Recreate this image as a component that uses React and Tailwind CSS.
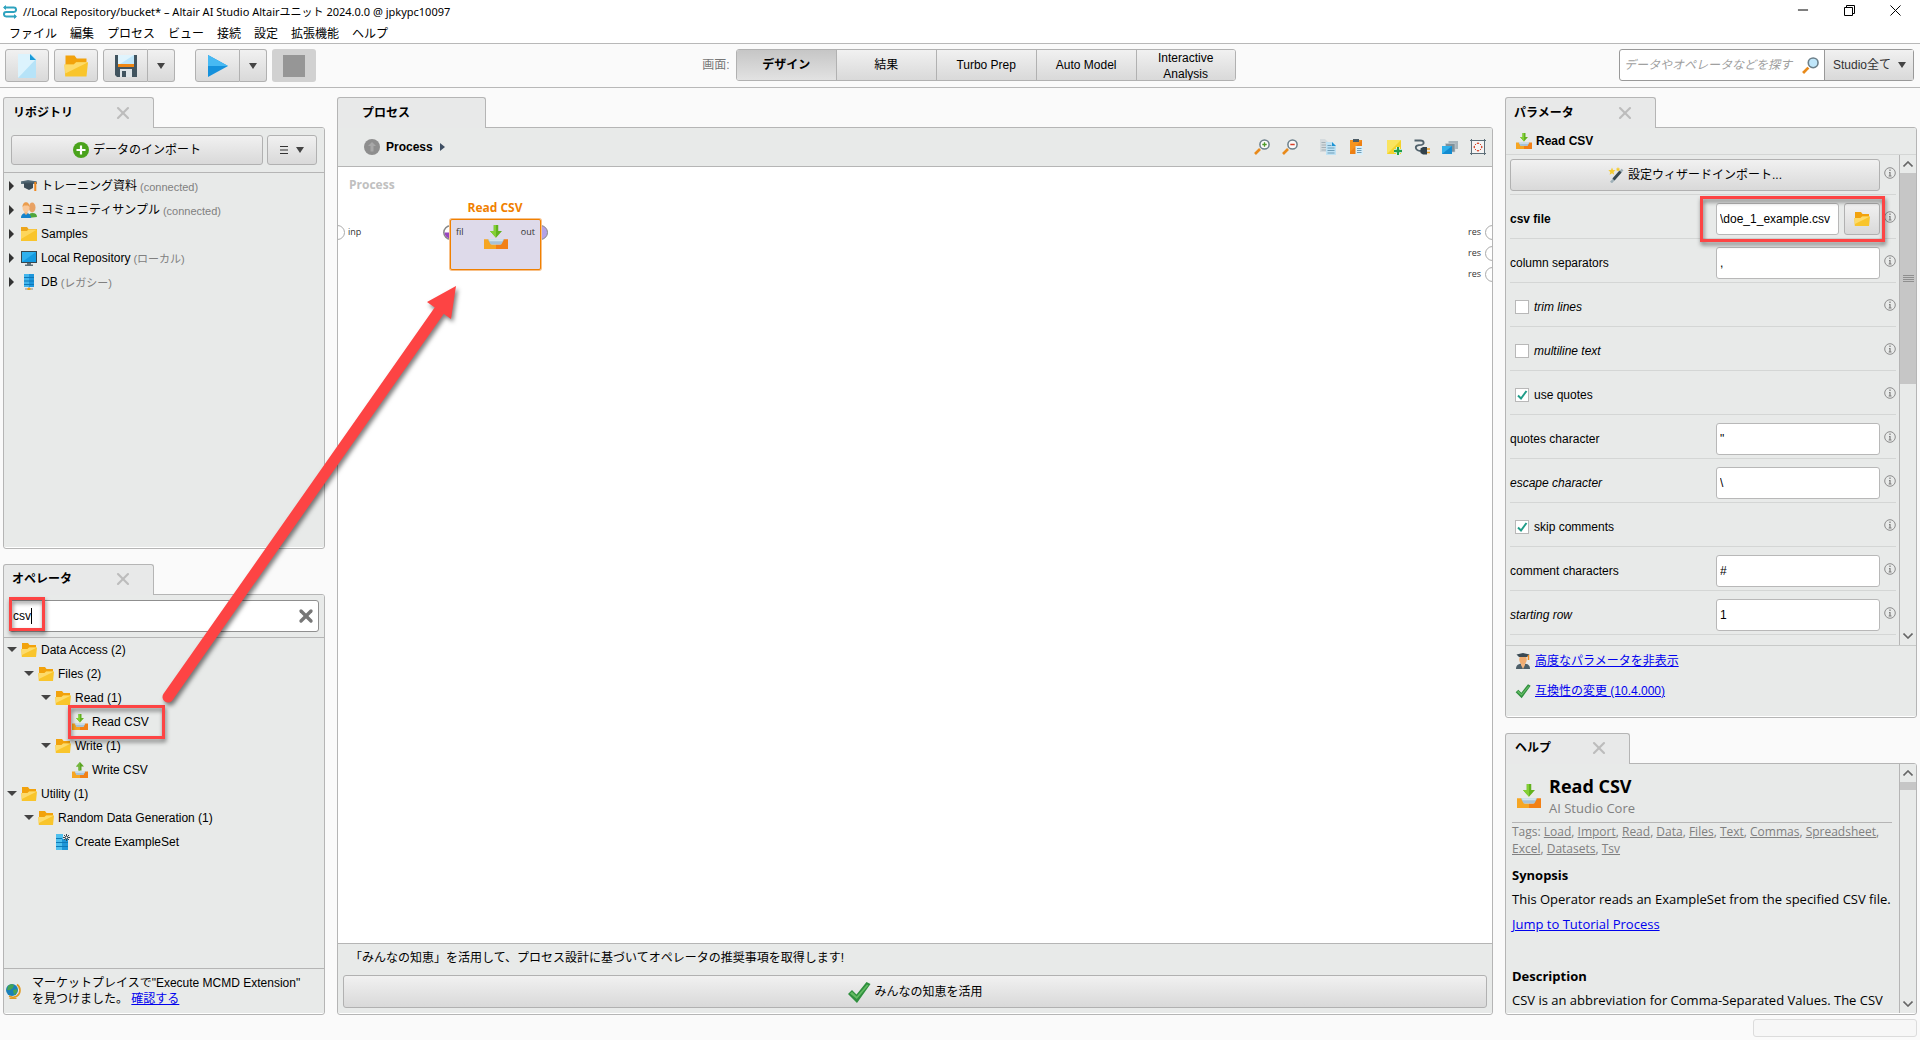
import { useState } from 'react';
import { Minus, X } from 'lucide-react';

const MENU = ['ファイル', '編集', 'プロセス', 'ビュー', '接続', '設定', '拡張機能', 'ヘルプ'];
const VIEWS = ['デザイン', '結果', 'Turbo Prep', 'Auto Model', 'Interactive Analysis'];
const TAGS = ['Load', 'Import', 'Read', 'Data', 'Files', 'Text', 'Commas', 'Spreadsheet', 'Excel', 'Datasets', 'Tsv'];

const REPOSITORIES = [
  { name: 'トレーニング資料', note: '(connected)', Icon: CapIcon },
  { name: 'コミュニティサンプル', note: '(connected)', Icon: PeopleIcon },
  { name: 'Samples', Icon: ClosedFolderIcon },
  { name: 'Local Repository', note: '(ローカル)', Icon: MonitorIcon },
  { name: 'DB', note: '(レガシー)', Icon: DatabaseIcon },
];

const OPERATORS = [
  { name: 'Data Access (2)', indent: 'pl-[3px]', Icon: FolderIcon, open: true },
  { name: 'Files (2)', indent: 'pl-[20px]', Icon: FolderIcon, open: true },
  { name: 'Read (1)', indent: 'pl-[37px]', Icon: FolderIcon, open: true },
  { name: 'Read CSV', indent: 'pl-[54px]', Icon: ReadIcon, marked: true },
  { name: 'Write (1)', indent: 'pl-[37px]', Icon: FolderIcon, open: true },
  { name: 'Write CSV', indent: 'pl-[54px]', Icon: WriteIcon },
  { name: 'Utility (1)', indent: 'pl-[3px]', Icon: FolderIcon, open: true },
  { name: 'Random Data Generation (1)', indent: 'pl-[20px]', Icon: FolderIcon, open: true },
  { name: 'Create ExampleSet', indent: 'pl-[37px]', Icon: ExampleSetIcon },
];

const PARAMS = [
  { id: 'csv-file', label: 'csv file', type: 'file', value: '\\doe_1_example.csv', look: 'font-bold' },
  { id: 'column-separators', label: 'column separators', type: 'text', value: ',' },
  { id: 'trim-lines', label: 'trim lines', type: 'check', value: false, look: 'italic' },
  { id: 'multiline-text', label: 'multiline text', type: 'check', value: false, look: 'italic' },
  { id: 'use-quotes', label: 'use quotes', type: 'check', value: true },
  { id: 'quotes-character', label: 'quotes character', type: 'text', value: '"' },
  { id: 'escape-character', label: 'escape character', type: 'text', value: '\\', look: 'italic' },
  { id: 'skip-comments', label: 'skip comments', type: 'check', value: true },
  { id: 'comment-characters', label: 'comment characters', type: 'text', value: '#' },
  { id: 'starting-row', label: 'starting row', type: 'text', value: '1', look: 'italic' },
];

const BUTTON = 'flex items-center justify-center border border-[#b1b1b1] bg-linear-to-b from-[#f1f1f1] to-[#d9d9d9]';
const INPUT = 'h-8 min-w-0 rounded-[3px] border border-[#b8b8b8] bg-white px-[3px] text-black outline-none';

/* ---------- icons ---------- */

function FolderIcon({ className = 'w-4 h-4' }) {
  return (
    <svg viewBox="0 0 16 16" className={className}>
      <path d="M1 1h6l1.5 2H15v6H1z" fill="#f2a20c" />
      <path d="M2.3 7h4.2l1.6-1.5H16L15 15H.8L.3 7z" fill="#f9c52c" />
      <path d="M2.3 7h4.2l1.6-1.5H16L.9 13 .3 7z" fill="#fddb6b" />
    </svg>
  );
}

function ClosedFolderIcon({ className = 'w-4 h-4' }) {
  return (
    <svg viewBox="0 0 16 16" className={className}>
      <path d="M0 1h6l1.5 2H16v4H0z" fill="#eda51a" />
      <path d="M0 5h6l1.5-1.500H16V15H0z" fill="#f9c52c" />
      <path d="M0 5h6l1.5-1.500H16L0 13z" fill="#fdd65a" />
    </svg>
  );
}

function Tray() {
  return (
    <>
      <path d="M0 9.500h3L5 13h3v3H0z" fill="#f6a623" />
      <path d="M16 9.500h-3L11 13H8v3h8z" fill="#f28016" />
      <path d="M2.500 9.500h11L11.500 13h-7z" fill="#a7c3d8" />
      <path d="M3 9.500h10l-.8 1.300H3.800z" fill="#d4e4ef" />
    </>
  );
}

function ReadIcon({ className = 'w-4 h-4' }) {
  return (
    <svg viewBox="0 0 16 16" className={className}>
      <Tray />
      <path d="M6.500 0h3v4H12L8 8.500 4 4h2.500z" fill="#62b21f" />
      <path d="M6.500 0H8v8.500L4 4h2.500z" fill="#83cf35" />
    </svg>
  );
}

function WriteIcon({ className = 'w-4 h-4' }) {
  return (
    <svg viewBox="0 0 16 16" className={className}>
      <Tray />
      <path d="M6.500 8.500h3v-4H12L8 0 4 4.500h2.500z" fill="#5aa522" />
      <path d="M6.500 8.500H8V0L4 4.500h2.500z" fill="#74b83e" />
    </svg>
  );
}

function ExampleSetIcon({ className = 'w-4 h-4' }) {
  return (
    <svg viewBox="0 0 16 16" className={className}>
      <path d="M1 0h7v16H1z" fill="#4fc0ee" />
      <path d="M8 5h5v11H7V5z" fill="#1e96d8" />
      <path d="M1 4.500h6M1 8.500h12M1 12.500h12" stroke="#0e7ab8" />
      <path d="M11.500 0v7M8 3.500h7M9 1l5 5M14 1L9 6" stroke="#37454f" strokeWidth="1" />
      <circle cx="11.500" cy="3.500" r="1" fill="#fff" />
    </svg>
  );
}

function CapIcon({ className = 'w-4 h-4' }) {
  return (
    <svg viewBox="0 0 16 16" className={className}>
      <path d="M0 3.500L7 2l9 1.500V6H0z" fill="#5d7480" />
      <path d="M3 5h9v5l-4 2-5-2.500z" fill="#3b4c57" />
      <path d="M0 3.500h15v1.800H3z" fill="#4a5f6b" />
      <path d="M14.300 4v9" stroke="#f0871c" strokeWidth="2" />
    </svg>
  );
}

function PeopleIcon({ className = 'w-4 h-4' }) {
  return (
    <svg viewBox="0 0 16 16" className={className}>
      <path d="M7 16c0-3 1.500-5 4.500-5S16 12.500 16 15z" fill="#4fa63a" />
      <ellipse cx="11.200" cy="5.500" rx="3.300" ry="5" fill="#e8a264" />
      <path d="M0 16c0-3.500 2-5 5-5s5 2 5 5z" fill="#1583cb" />
      <path d="M3.500 8h3v3.500L5 13l-1.500-1.500z" fill="#f0b27a" />
      <ellipse cx="5" cy="5.500" rx="3.500" ry="5" fill="#f9c797" />
      <path d="M1.500 5C1.500 2 3 .3 5 .3S8.500 2 8.500 5L7 3.500H3z" fill="#ea9d4d" />
    </svg>
  );
}

function MonitorIcon({ className = 'w-4 h-4' }) {
  return (
    <svg viewBox="0 0 16 16" className={className}>
      <path d="M0 1h16v12H0z" fill="#37474f" />
      <path d="M1 2h14v10H1z" fill="#139ae0" />
      <path d="M1 2h14L1 12z" fill="#2fb1ee" />
      <path d="M6 13h4v1.500h2V16H4v-1.500h2z" fill="#5c6f79" />
    </svg>
  );
}

function DatabaseIcon({ className = 'w-4 h-4' }) {
  return (
    <svg viewBox="0 0 16 16" className={className}>
      <path d="M3 0h10v13H3z" fill="#1f97dc" />
      <path d="M3 0h5v13H3z" fill="#42b5ec" />
      <path d="M3 3.500h10M3 7h10M3 10.500h10" stroke="#0f78b8" />
      <path d="M8 13v2M4 15h8" stroke="#8d8d8d" />
      <path d="M6.500 14h3v2h-3z" fill="#f2a20c" />
    </svg>
  );
}

function CheckMark({ className }) {
  return (
    <svg viewBox="0 0 24 24" className={className}>
      <path d="M1 14l4-4 4.500 4.500L19.500 2 23.500 4 10 23z" fill="#2f8f3e" />
      <path d="M3 13.500l2-1.800 4.700 4.800L20 4.500l1.500.8L9.800 19z" fill="#63bb62" />
    </svg>
  );
}

function Magnifier({ className = 'w-4 h-4', sign }) {
  return (
    <svg viewBox="0 0 16 16" className={className}>
      <path d="M1 15l5-5" stroke="#e88a1a" strokeWidth="2.600" />
      <circle cx="10.500" cy="5.500" r="4.600" fill={sign ? '#fbfbfb' : '#bfe6fa'} stroke="#6b7f8a" strokeWidth="1.500" />
      {sign && <path d="M8.300 5.500h4.400" stroke={sign === 'plus' ? '#4c9a2a' : '#d8402a'} strokeWidth="1.300" />}
      {sign === 'plus' && <path d="M10.500 3.300v4.400" stroke="#4c9a2a" strokeWidth="1.300" />}
    </svg>
  );
}

function CopyIcon() {
  return (
    <svg viewBox="0 0 16 16" className="w-4 h-4">
      <path d="M0 0h5l4 4v9H0z" fill="#d5dbde" />
      <path d="M1.500 3.500h4M1.500 6h5M1.500 8.500h5M1.500 11h5" stroke="#a3b0b7" />
      <path d="M6 3h6l4 4v9H6z" fill="#bfe2f4" />
      <path d="M12 3l4 4h-4z" fill="#1c93d4" />
      <path d="M7.500 6.500h4M7.500 9h7M7.500 11.500h7M7.500 14h7" stroke="#6f9fba" />
    </svg>
  );
}

function PasteIcon() {
  return (
    <svg viewBox="0 0 16 16" className="w-4 h-4">
      <path d="M2 1h12v14H2z" fill="#ee8014" />
      <path d="M2 1h12L2 13z" fill="#f7941e" />
      <path d="M5 0h6v3H5z" fill="#4b5c66" />
      <path d="M7.500 7H15v9H7.500z" fill="#d9effa" />
      <path d="M9 9.500h4.500M9 11.500h4.500M9 13.500h4.500" stroke="#6d9cb8" />
    </svg>
  );
}

function NoteIcon() {
  return (
    <svg viewBox="0 0 16 16" className="w-4 h-4">
      <path d="M1 1h14v14H1z" fill="#f3d22b" />
      <path d="M1 1h14L1 15z" fill="#fae45f" />
      <path d="M12 8v8M8 12h8" stroke="#fff" strokeWidth="4" />
      <path d="M12 8v8M8 12h8" stroke="#1fa04a" strokeWidth="2.300" />
    </svg>
  );
}

function PlugIcon() {
  return (
    <svg viewBox="0 0 16 16" className="w-4 h-4">
      <path d="M.5 1.500h6c4 0 4 4 1 4.300C4 6 1 6.500 2 9.500c.6 2 3 2.500 6 2.500" fill="none" stroke="#52636d" strokeWidth="1.800" />
      <path d="M6.500 9.500L9 8h4v7.500H9L6.500 14z" fill="#33424b" />
      <path d="M13 10h3M13 13.500h3" stroke="#f0a020" strokeWidth="1.400" />
    </svg>
  );
}

function LayersIcon() {
  return (
    <svg viewBox="0 0 16 16" className="w-4 h-4">
      <path d="M6.500 2h9.500v8H6.500z" fill="#aab5bb" />
      <path d="M3.500 4.500H13V13H3.500z" fill="#7e919b" stroke="#c9d1d5" strokeWidth=".6" />
      <path d="M0 7h10v8H0z" fill="#128bd0" />
      <path d="M0 7h10L0 15z" fill="#30b0ea" />
    </svg>
  );
}

function FitIcon() {
  return (
    <svg viewBox="0 0 16 16" className="w-4 h-4">
      <path d="M2 1.500h12v13H2z" fill="#f4f4f4" />
      <path d="M1.500 0v16M14.500 0v16M0 1.500h16M0 14.500h16" stroke="#5d6e78" />
      <path d="M8 3l1.500 2h-3zM8 13l-1.500-2h3zM3 8l2-1.500v3zM13 8l-2 1.500v-3z" fill="#d8482e" />
      <path d="M5 5h1v1H5zM10 5h1v1h-1zM5 10h1v1H5zM10 10h1v1h-1z" fill="#d8482e" />
    </svg>
  );
}

function InfoIcon() {
  return (
    <svg viewBox="0 0 12 12" className="mb-1 h-3 w-3 shrink-0">
      <circle cx="6" cy="6" r="5.300" fill="none" stroke="#8c8c8c" />
      <path d="M6 2.500v1.500M5 5.500h1V9M4.700 9h2.800" fill="none" stroke="#7c7c7c" strokeWidth="1.200" />
    </svg>
  );
}

function WandIcon() {
  return (
    <svg viewBox="0 0 16 16" className="h-4 w-4">
      <path d="M3 15.500L14.500 2.500" stroke="#9fb0b8" strokeWidth="2.600" />
      <path d="M5.500 12.500L12.500 4.500" stroke="#37474f" strokeWidth="2.800" />
      <path d="M4 .5l1 2.500 2.500.3-2 1.700.7 2.700L4 6.300 1.600 7.700l.7-2.700-2-1.700L3 3zM10 0l.7 1.500 1.500.2-1.100 1 .3 1.500L10 3.500l-1.400.7.3-1.500-1.100-1 1.500-.2z" fill="#f5cb2e" />
    </svg>
  );
}

function GraduateIcon() {
  return (
    <svg viewBox="0 0 16 16" className="h-4 w-4">
      <path d="M1 16c0-4 2.500-5.500 7-5.500s7 1.500 7 5.500z" fill="#4d5f69" />
      <path d="M6 10h4v2l-2 4-2-4z" fill="#f1b580" />
      <ellipse cx="8" cy="6.500" rx="3.800" ry="4.800" fill="#f0ac70" />
      <path d="M1.500 1.500L8 0l6.500 1.500L12 4H4z" fill="#3a4a54" />
      <path d="M13.500 2v5" stroke="#ef8a1d" strokeWidth="1.500" />
    </svg>
  );
}

function GlobeIcon() {
  return (
    <svg viewBox="0 0 16 16" className="h-4 w-4 shrink-0">
      <path d="M12 1.500a7 7 0 010 11.500L8 14.500 4 13" fill="none" stroke="#e09b22" strokeWidth="1.600" />
      <circle cx="7" cy="7" r="6" fill="#1a80b8" />
      <path d="M3 3c2-2 5-2 6-1l-1 3-3 2-3 0zM8 7l4-1c1 3-1 5-3 6z" fill="#45a455" />
      <path d="M4.500 15.300h7" stroke="#e09b22" strokeWidth="1.500" />
    </svg>
  );
}

function Caret({ className = 'text-[#444]' }) {
  return (
    <svg viewBox="0 0 8 6" className={`h-[6px] w-2 ${className}`}>
      <path d="M0 0h8L4 6z" fill="currentColor" />
    </svg>
  );
}

/* ---------- layout parts ---------- */

function Panel({ title, tabWidth, titlePad, closable = true, className = '', children }) {
  return (
    <section className={`flex min-h-0 flex-col ${className}`}>
      <div className={`relative z-10 -mb-px flex h-[31px] shrink-0 items-center justify-between rounded-t-[3px] border border-b-0 border-[#b5b5b5] bg-[#e8e9e9] pr-5 pb-px ${tabWidth} ${titlePad}`}>
        <h2 className="text-[12px] leading-4 font-bold">{title}</h2>
        {closable && (
          <button aria-label={`${title} を閉じる`} className="text-[#bcbcbc]">
            <X size={20} strokeWidth={2.5} />
          </button>
        )}
      </div>
      <div className="flex min-h-0 flex-1 flex-col overflow-hidden rounded-[3px] rounded-tl-none border border-[#b5b5b5] bg-white pb-px">
        <div className="flex min-h-0 flex-1 flex-col bg-[#e8eae9]">{children}</div>
      </div>
    </section>
  );
}

function Scrollbar({ thumb, grip }) {
  return (
    <div className="flex w-[17px] shrink-0 flex-col items-center border-l border-[#b5b5b5] bg-[#e8eae9] text-[#666]">
      <svg viewBox="0 0 10 6" className="my-[6px] h-[6px] w-[10px] shrink-0">
        <path d="M.5 5.500L5 1l4.500 4.500" fill="none" stroke="currentColor" strokeWidth="1.600" />
      </svg>
      <div className={`flex w-full items-center justify-center bg-[#c6c6c6] ${thumb}`}>
        {grip && <div className="h-[7px] w-[11px] bg-[repeating-linear-gradient(#8f8f8f_0_1px,#c6c6c6_1px_2px)]" />}
      </div>
      <div className="flex-1" />
      <svg viewBox="0 0 10 6" className="my-[6px] h-[6px] w-[10px] shrink-0">
        <path d="M.5.500L5 5l4.500-4.500" fill="none" stroke="currentColor" strokeWidth="1.600" />
      </svg>
    </div>
  );
}

function Marker({ className }) {
  return (
    <span className={`pointer-events-none absolute z-20 border-[3px] border-[#fd4444] drop-shadow-[1px_3px_2px_rgba(0,0,0,0.5)] ${className}`} />
  );
}

function TitleBar() {
  return (
    <header className="flex h-6 shrink-0 items-center bg-white pl-[3px]">
      <svg viewBox="0 0 14 14" className="h-[14px] w-[14px]">
        <path d="M1 2.500h9.800a2.200 2.200 0 010 4.500H3.200a2.200 2.200 0 000 4.500H13" fill="none" stroke="#2fa3bf" strokeWidth="2" />
        <path d="M3 0v5L0 2.500zM11 9v5l3-2.500z" fill="#2fa3bf" />
      </svg>
      <h1 className="ml-[6px] font-['Noto_Sans','Noto_Sans_CJK_JP',sans-serif] text-[11px] leading-4">
        //Local Repository/bucket* – Altair AI Studio Altairユニット 2024.0.0 @ jpkypc10097
      </h1>
      <div className="ml-auto flex self-start pr-[2px]">
        <button aria-label="最小化" className="flex h-5 w-[46px] items-center justify-center"><Minus size={16} strokeWidth={1.5} /></button>
        <button aria-label="元に戻す" className="flex h-5 w-[46px] items-center justify-center">
          <svg viewBox="0 0 11 11" className="h-[11px] w-[11px]">
            <path d="M.5 2.500h8v8h-8zM2.500 2.500v-2h8v8h-2" fill="none" stroke="#000" />
          </svg>
        </button>
        <button aria-label="閉じる" className="flex h-5 w-[46px] items-center justify-center"><X size={19} strokeWidth={1.25} /></button>
      </div>
    </header>
  );
}

function Toolbar() {
  const [view, setView] = useState(VIEWS[0]);

  return (
    <div className="flex h-[45px] shrink-0 items-start justify-between border-y border-[#b8b8b8] bg-[#fafafa] pt-[5px] pr-[6px] pl-[5px]">
      <div className="flex">
        <button aria-label="新規プロセス" className={`mr-[5px] h-[33px] w-11 rounded-[3px] ${BUTTON}`}>
          <svg viewBox="0 0 18 24" className="h-6 w-[18px]">
            <path d="M0 0h13l5 5v19H0z" fill="#b6e3f8" />
            <path d="M0 0h13l5 5L0 24z" fill="#dcf3fd" />
            <path d="M12 0l6 6h-6z" fill="#199ad8" />
          </svg>
        </button>
        <button aria-label="開く" className={`mr-[5px] h-[33px] w-11 rounded-[3px] ${BUTTON}`}><FolderIcon className="h-6 w-6" /></button>
        <button aria-label="保存" className={`h-[33px] w-[45px] rounded-l-[3px] ${BUTTON}`}>
          <svg viewBox="0 0 22 22" className="h-[22px] w-[22px]">
            <path d="M0 0h22v22H2l-2-2z" fill="#41545f" />
            <path d="M3 0h16v9H3z" fill="#bfe6fa" />
            <path d="M3 0h16L5 9H3z" fill="#e0f4fd" />
            <path d="M3 9h16v3H3z" fill="#ef8714" />
            <path d="M5 14h12v8H5z" fill="#dfe5e8" />
            <path d="M7 16h4v6H7z" fill="#41545f" />
          </svg>
        </button>
        <button aria-label="保存オプション" className={`mr-5 h-[33px] w-[27px] rounded-r-[3px] border-l-0 ${BUTTON}`}><Caret /></button>
        <button aria-label="実行" className={`h-[33px] w-[45px] rounded-l-[3px] ${BUTTON}`}>
          <svg viewBox="0 0 20 22" className="h-[22px] w-5">
            <path d="M0 0l20 11L0 22z" fill="#1591dc" />
            <path d="M0 0l20 11H0z" fill="#47b9f3" />
          </svg>
        </button>
        <button aria-label="実行オプション" className={`mr-[5px] h-[33px] w-[27px] rounded-r-[3px] border-l-0 ${BUTTON}`}><Caret /></button>
        <button aria-label="停止" className="flex h-[33px] w-11 items-center justify-center rounded-[3px] bg-[#d1d1d1]"><span className="h-[22px] w-[22px] bg-[#969696]" /></button>
      </div>

      <div className="flex items-center pl-[3px]">
        <span className="mr-[6px] text-[#777]">画面:</span>
        <div className="flex overflow-hidden rounded-[3px] border border-[#b1b1b1]">
          {VIEWS.map(v => (
            <button
              key={v}
              onClick={() => setView(v)}
              className={`h-[30px] w-[100px] border-l border-[#b1b1b1] bg-linear-to-b px-4 leading-4 first:w-[99px] first:border-l-0 last:w-[99px] ${
                v === view ? 'from-[#c6c6c6] to-[#e2e2e2] font-bold' : 'from-[#f1f1f1] to-[#d9d9d9]'
              }`}
            >
              {v}
            </button>
          ))}
        </div>
      </div>

      <div className="flex h-8 w-[295px] rounded-[3px] border border-[#999] bg-white">
        <input
          aria-label="検索"
          placeholder="データやオペレータなどを探す"
          className="min-w-0 flex-1 bg-transparent pl-1 outline-none placeholder:text-[#a0a0a0] placeholder:italic"
        />
        <button aria-label="検索" className="mr-[5px]"><Magnifier className="h-[17px] w-[17px]" /></button>
        <div className="relative w-[89px] border-l border-[#999]">
          <select aria-label="検索範囲" className="h-full w-full appearance-none bg-linear-to-b from-[#f1f1f1] to-[#d9d9d9] pl-2 text-[#333] outline-none">
            <option>Studio全て</option>
          </select>
          <span className="pointer-events-none absolute top-3 right-[7px]"><Caret /></span>
        </div>
      </div>
    </div>
  );
}

function RepositoryPanel() {
  return (
    <Panel title="リポジトリ" tabWidth="w-[151px]" titlePad="pl-[9px]" className="flex-1">
      <div className="flex gap-1 border-b border-[#b5b5b5] px-[7px] py-[7px]">
        <button className={`h-[30px] flex-1 gap-1 rounded-[3px] ${BUTTON}`}>
          <svg viewBox="0 0 16 16" className="h-4 w-4">
            <circle cx="8" cy="8" r="8" fill="#4aa31c" />
            <path d="M8 3.500v9M3.500 8h9" stroke="#fff" strokeWidth="2.200" />
          </svg>
          データのインポート
        </button>
        <button aria-label="リポジトリメニュー" className={`h-[30px] w-[50px] gap-2 rounded-[3px] ${BUTTON}`}>
          <svg viewBox="0 0 8 8" className="h-2 w-2">
            <path d="M0 .5h8M0 4h8M0 7.500h8" stroke="#333" />
          </svg>
          <Caret />
        </button>
      </div>
      <ul className="pt-px">
        {REPOSITORIES.map(({ name, note, Icon }) => (
          <li key={name} className="flex h-6 items-center pl-[5px]">
            <svg viewBox="0 0 5 10" className="mr-[7px] h-[10px] w-[5px]"><path d="M0 0l5 5-5 5z" fill="#333" /></svg>
            <Icon />
            <span className="ml-1">{name}</span>
            {note && <span className="ml-[3px] pt-px text-[11px] text-[#808080]">{note}</span>}
          </li>
        ))}
      </ul>
    </Panel>
  );
}

function OperatorPanel() {
  return (
    <Panel title="オペレータ" tabWidth="w-[151px]" titlePad="pl-[8px]" className="flex-1">
      <div className="border-b border-[#b5b5b5] px-[5px] py-[5px]">
        <div className="relative flex h-8 items-center rounded-[3px] border border-[#8f8f8f] bg-white">
          <input aria-label="オペレータを検索" defaultValue="csv" className="min-w-0 flex-1 bg-transparent pl-[3px] outline-none" />
          <span className="absolute top-[7px] left-[21px] h-4 w-px bg-black" />
          <button aria-label="クリア" className="mr-[2px] text-[#777]"><X size={20} strokeWidth={4} /></button>
          <Marker className="-top-1 -left-px h-[34px] w-9" />
        </div>
      </div>
      <ul className="flex-1">
        {OPERATORS.map(({ name, indent, Icon, open, marked }) => (
          <li key={name} className={`flex h-6 items-center ${indent}`}>
            <span className="mr-1 flex w-[10px]">
              {open && <svg viewBox="0 0 10 5" className="h-[5px] w-[10px]"><path d="M0 0h10L5 5z" fill="#444" /></svg>}
            </span>
            <span className="relative flex items-center">
              <Icon />
              <span className="ml-1">{name}</span>
              {marked && <Marker className="-top-[9px] -left-1 h-[34px] w-[97px]" />}
            </span>
          </li>
        ))}
      </ul>
      <div className="flex items-center gap-[11px] border-t border-[#b5b5b5] py-[6px] pl-px">
        <GlobeIcon />
        <p className="leading-4">
          マーケットプレイスで"Execute MCMD Extension"<br />
          を見つけました。 <a href="#market" className="text-[#0000ee] underline">確認する</a>
        </p>
      </div>
    </Panel>
  );
}

function ProcessCanvas() {
  return (
    <div className="relative min-h-0 flex-1 overflow-hidden bg-white font-['Open_Sans',sans-serif] text-[9px] leading-4 text-[#333]">
      <span className="absolute top-[10px] left-[11px] text-[12px] font-bold text-[#c0c0c0]">Process</span>

      <span className="absolute top-[58px] -left-2 h-[15px] w-[15px] rounded-full border border-[#aaa]" />
      <span className="absolute top-[57px] left-[10px]">inp</span>

      <span className="absolute top-[33px] left-[112px] w-[90px] text-center text-[12px] font-bold text-[#f08000]">Read CSV</span>
      <svg viewBox="0 0 15 15" className="absolute top-[58px] left-[105px] h-[15px] w-[15px]">
        <circle cx="7.500" cy="7.500" r="6.700" fill="#fff" stroke="#888" strokeWidth="1.500" />
        <path d="M1.500 7.500h12a6 6 0 01-12 0z" fill="#9848c0" />
      </svg>
      <span className="absolute top-[58px] left-[195px] h-[15px] w-[15px] rounded-full border border-[#888] bg-[#b3a2e6]" />
      <div className="absolute top-[52px] left-[112px] grid h-[51px] w-[91px] grid-cols-[1fr_auto_1fr] items-start rounded-[2px] border border-[#f08000] bg-[#dedaea] px-[5px] pt-1 shadow-[0_0_0_1px_#f8c088]">
        <span>fil</span>
        <ReadIcon className="mt-px h-6 w-6" />
        <span className="text-right">out</span>
      </div>

      {['top-[57px]', 'top-[78px]', 'top-[99px]'].map(top => (
        <div key={top} className={`absolute -right-2 flex items-center gap-1 ${top}`}>
          <span>res</span>
          <span className="h-[15px] w-[15px] rounded-full border border-[#aaa]" />
        </div>
      ))}
    </div>
  );
}

function ProcessPanel() {
  return (
    <Panel title="プロセス" tabWidth="w-[149px]" titlePad="pl-6" closable={false} className="min-w-0 flex-1">
      <div className="flex h-[39px] shrink-0 items-center border-b border-[#b5b5b5] pr-[6px] pl-[26px]">
        <svg viewBox="0 0 16 16" className="h-4 w-4">
          <circle cx="8" cy="8" r="8" fill="#8e8e8e" />
          <path d="M8 3l4 4H9.500v5.500h-3V7H4z" fill="#a8a8a8" />
        </svg>
        <span className="mr-[7px] ml-[6px] font-bold">Process</span>
        <svg viewBox="0 0 5 8" className="h-2 w-[5px]"><path d="M0 0l5 4-5 4z" fill="#3f4f63" /></svg>
        <div className="ml-auto flex gap-3">
          <button aria-label="拡大"><Magnifier sign="plus" /></button>
          <button aria-label="縮小"><Magnifier sign="minus" /></button>
          <button aria-label="コピー" className="ml-[10px]"><CopyIcon /></button>
          <button aria-label="貼り付け"><PasteIcon /></button>
          <button aria-label="ノートを追加" className="ml-[10px]"><NoteIcon /></button>
          <button aria-label="自動配線"><PlugIcon /></button>
          <button aria-label="実行順序"><LayersIcon /></button>
          <button aria-label="サイズを合わせる"><FitIcon /></button>
        </div>
      </div>
      <ProcessCanvas />
      <div className="border-t border-[#b5b5b5] px-[5px] pt-[6px] pb-[5px]">
        <p className="mb-[9px] pl-[7px] leading-4">「みんなの知恵」を活用して、プロセス設計に基づいてオペレータの推奨事項を取得します!</p>
        <button className={`h-[33px] w-full gap-[3px] rounded-[3px] ${BUTTON}`}>
          <CheckMark className="h-6 w-6" />
          みんなの知恵を活用
        </button>
      </div>
    </Panel>
  );
}

function ParamRow({ param }) {
  const [value, setValue] = useState(param.value);
  const label = <label htmlFor={param.id} className={`flex-1 ${param.look || ''}`}>{param.label}</label>;

  return (
    <div className="flex items-center border-b border-[#d4d6d5] pt-2 pb-[3px]">
      {param.type === 'check' && (
        <div className="flex h-8 flex-1 items-center gap-[5px] pl-[5px]">
          <span className="relative flex">
            <input
              id={param.id}
              type="checkbox"
              checked={value}
              onChange={e => setValue(e.target.checked)}
              className="h-[14px] w-[14px] appearance-none border border-[#b8b8b8] bg-white"
            />
            {value && (
              <svg viewBox="0 0 14 14" className="pointer-events-none absolute inset-0">
                <path d="M3 7.500l3 3L11.500 3" fill="none" stroke="#1f9c88" strokeWidth="2" />
              </svg>
            )}
          </span>
          {label}
        </div>
      )}
      {param.type === 'text' && (
        <>
          {label}
          <input id={param.id} value={value} onChange={e => setValue(e.target.value)} className={`w-[164px] ${INPUT}`} />
        </>
      )}
      {param.type === 'file' && (
        <>
          {label}
          <div className="relative flex w-[164px] gap-[5px]">
            <input id={param.id} value={value} onChange={e => setValue(e.target.value)} className={`flex-1 ${INPUT}`} />
            <button aria-label="ファイルを選択" className={`h-8 w-9 rounded-[3px] ${BUTTON}`}><FolderIcon /></button>
            <Marker className="-top-[7px] -right-[5px] h-[46px] w-[185px]" />
          </div>
        </>
      )}
      <span className="ml-1 flex"><InfoIcon /></span>
    </div>
  );
}

function ParameterPanel() {
  return (
    <Panel title="パラメータ" tabWidth="w-[151px]" titlePad="pl-2" className="flex-[11]">
      <div className="flex h-[27px] shrink-0 items-center gap-1 border-b border-[#d4d6d5] pl-[10px] font-bold">
        <ReadIcon />
        Read CSV
      </div>
      <div className="flex min-h-0 flex-1">
        <div className="mr-[3px] min-w-0 flex-1 overflow-hidden pl-1">
          <div className="flex items-center border-b border-[#d4d6d5] pt-1 pb-[3px]">
            <button className={`h-8 flex-1 gap-1 rounded-[3px] ${BUTTON}`}>
              <WandIcon />
              設定ウィザードインポート...
            </button>
            <span className="ml-1 flex"><InfoIcon /></span>
          </div>
          {PARAMS.map(p => <ParamRow key={p.id} param={p} />)}
        </div>
        <Scrollbar thumb="h-[43%]" grip />
      </div>
      <div className="flex flex-col gap-[14px] border-t border-[#c8cac9] pt-[7px] pb-[17px] pl-[9px]">
        <a href="#advanced" className="flex items-center gap-1 text-[#0000ee]"><GraduateIcon /><span className="underline">高度なパラメータを非表示</span></a>
        <a href="#compatibility" className="flex items-center gap-1 text-[#0000ee]"><CheckMark className="h-4 w-4" /><span className="underline">互換性の変更 (10.4.000)</span></a>
      </div>
    </Panel>
  );
}

function HelpPanel() {
  return (
    <Panel title="ヘルプ" tabWidth="w-[125px]" titlePad="pl-[9px]" className="flex-[5]">
      <div className="flex min-h-0 flex-1">
        <article className="min-w-0 flex-1 overflow-hidden pt-[10px] pr-[7px] pl-[6px] font-['Open_Sans',sans-serif] text-[13px] leading-[17px]">
          <div className="flex items-center gap-2 border-b border-[#b5b5b5] pb-1 pl-[5px]">
            <ReadIcon className="h-6 w-6" />
            <div>
              <h3 className="text-[18px] leading-6 font-bold">Read CSV</h3>
              <p className="leading-5 text-[#808080]">AI Studio Core</p>
            </div>
          </div>
          <p className="text-[12px] leading-[17px] text-[#808080]">
            Tags:{' '}
            {TAGS.map((t, i) => (
              <span key={t}><a href="#tag" className="underline">{t}</a>{i < TAGS.length - 1 && ', '}</span>
            ))}
          </p>
          <h4 className="mt-[10px] font-bold">Synopsis</h4>
          <p className="mt-[7px]">This Operator reads an ExampleSet from the specified CSV file.</p>
          <p className="mt-2"><a href="#tutorial" className="text-[#0000ee] underline">Jump to Tutorial Process</a></p>
          <h4 className="mt-[35px] font-bold">Description</h4>
          <p className="mt-[7px]">CSV is an abbreviation for Comma-Separated Values. The CSV</p>
        </article>
        <Scrollbar thumb="h-2" />
      </div>
    </Panel>
  );
}

export default function App() {
  return (
    <div className="relative flex h-screen flex-col overflow-hidden bg-[#fafafa] font-['Liberation_Sans','Noto_Sans_CJK_JP',sans-serif] text-[12px] leading-4 text-black">
      <TitleBar />
      <nav className="flex h-[19px] shrink-0 items-center gap-[13px] bg-white pl-[9px]">
        {MENU.map(m => <button key={m}>{m}</button>)}
      </nav>
      <Toolbar />

      <main className="flex min-h-0 flex-1 gap-3 px-[3px] pt-[9px]">
        <div className="flex w-[322px] shrink-0 flex-col gap-[15px]">
          <RepositoryPanel />
          <OperatorPanel />
        </div>
        <ProcessPanel />
        <div className="flex w-[412px] shrink-0 flex-col gap-[15px]">
          <ParameterPanel />
          <HelpPanel />
        </div>
      </main>

      <footer className="flex shrink-0 justify-end pt-1 pr-[3px] pb-[3px]">
        <div className="h-[18px] w-[164px] rounded-[3px] border border-[#dcdcdc] bg-[#f7f7f7]" />
      </footer>

      {/* drag arrow from the operator tree to the canvas */}
      <svg viewBox="0 0 310 430" className="pointer-events-none absolute top-[280px] left-[155px] z-30 h-[430px] w-[310px] drop-shadow-[2px_3px_2px_rgba(0,0,0,0.5)]">
        <path d="M13 417L284 31" stroke="#fd4444" strokeWidth="11" strokeLinecap="round" />
        <path d="M301 6L272 22 296 39z" fill="#fd4444" />
      </svg>
    </div>
  );
}
